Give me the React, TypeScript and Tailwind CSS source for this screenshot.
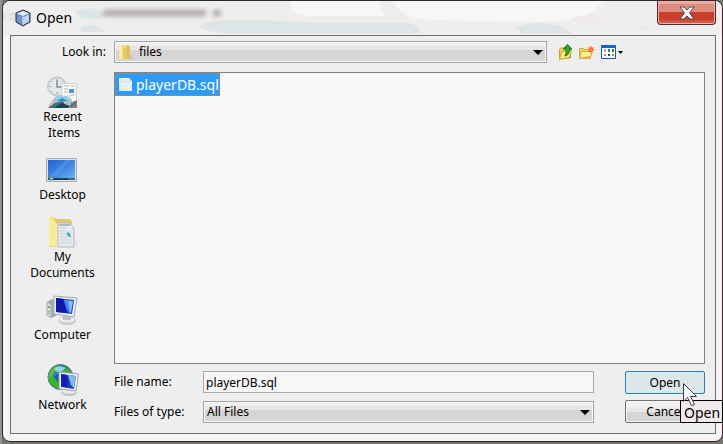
import { useState } from 'react'
import type { ReactNode } from 'react'

const comboClass =
  'h-[22px] w-full appearance-none rounded-none border border-[#a3a3ac] bg-[linear-gradient(#f0f0f0_0_4px,#ece5e6_4px_8px,#d5d5d5_8px)] pr-5 text-xs text-black shadow-[inset_0_0_0_1px_#f7f7f7] outline-none'

function AppIcon() {
  return (
    <svg width="18" height="18" viewBox="0 0 18 18" aria-hidden="true">
      <path d="M9 1 16 4v9l-7 4-7-4V4z" fill="#6585b5" stroke="#26334c" />
      <path d="M3 4.500 9 2l6 2.500L9 7z" fill="#e5eefa" />
      <path d="M3 5.500 8.500 8v7.500L3 12.500z" fill="#6f93ca" />
      <path d="M9.500 8 15 5.500v7l-5.500 3z" fill="#c3d5ee" />
      <path d="M9 7.500V16" stroke="#eef5ff" />
    </svg>
  )
}

function FolderIcon() {
  return (
    <svg width="16" height="16" viewBox="0 0 16 16" aria-hidden="true">
      <path d="M1 1h9l2 2v12H1z" fill="#f2dd82" />
      <path d="M1 1h3v14H1z" fill="#faeda9" />
      <path d="M8 2h4v9l2 2v2H8z" fill="#dfc05a" />
      <path d="M5 4h3v11H5z" fill="#e7cb68" />
      <path d="M12 11h2l1 4h-3z" fill="#c6c3b9" />
    </svg>
  )
}

function FileIcon() {
  return (
    <svg width="14" height="15" viewBox="0 0 14 15" aria-hidden="true">
      <path d="M0 1h10l3 3v10H0z" fill="#f7f7f7" />
      <path d="M10 1v3h3z" fill="#b6d4ea" />
      <path d="M1 3h8M1 5h11" stroke="#c8dfee" />
      <path d="M0 7h13v7H0z" fill="#dfe7ea" />
      <path d="M1 8h11M1 10h11M1 12h11" stroke="#f3f5f5" />
    </svg>
  )
}

function RecentIcon() {
  return (
    <svg width="32" height="32" viewBox="0 0 32 32" aria-hidden="true">
      <circle cx="11" cy="10.500" r="10" fill="#c3c5c6" />
      <circle cx="11" cy="10.500" r="8.500" fill="#e4e8e8" stroke="#d3d5d5" />
      <path d="M11 3v2M11 16v2M3 10.500h2M5.500 5l1 1M16.500 5l-1 1M5.500 16l1-1" stroke="#9ba4a6" />
      <path d="M11 4v7h5" fill="none" stroke="#7c8f9a" strokeWidth="1.500" />
      <path d="M3 29l6-8 8-1 14 5v7H2z" fill="#b9bdbf" />
      <path d="M2 32l7-5 8-2 3 7z" fill="#3d6f6c" />
      <path d="M8 32l8-5 8 3-2 2z" fill="#1b4550" />
      <path d="M10 20h12v5H10z" fill="#8ccdee" />
      <path d="M11 25l5-3 6 3z" fill="#298cd8" />
      <path d="M16 7.500h14.500V25l-4 1-3-6h-8z" fill="#f9f9f9" stroke="#cfd1d3" />
      <path d="M18 10h5M25 10h4M18 13h4M18 16h4M24 19h5" stroke="#b0b4b9" />
      <path d="M23 13h5v4h-5z" fill="#4f93cb" />
      <path d="M25 27l6-3v8h-8z" fill="#7a8083" />
      <path d="M24 31l6-5" stroke="#4d5558" />
    </svg>
  )
}

function DesktopIcon() {
  return (
    <svg width="32" height="32" viewBox="0 0 32 32" aria-hidden="true">
      <defs>
        <linearGradient id="desktopSky" x1="0" y1="0" x2="1" y2="1">
          <stop offset="0" stopColor="#2265cf" />
          <stop offset=".5" stopColor="#3d83e4" />
          <stop offset="1" stopColor="#69b5f3" />
        </linearGradient>
      </defs>
      <path d="M.5 4.500h30v23H.5z" fill="#dfe1e4" stroke="#a8aeb8" />
      <path d="M2 6h27v18H2z" fill="url(#desktopSky)" />
      <path d="M20 6h5L10 22H4z" fill="#76aaf0" opacity=".35" />
      <path d="M2 24h27v2H2z" fill="#263d55" />
      <path d="M22 24h7v2h-7z" fill="#4c6371" />
      <circle cx="5" cy="24" r="2.500" fill="#2b9ec6" />
      <path d="M4 22h1v2H3z" fill="#e26a34" />
      <path d="M5 24h2v1H5z" fill="#f2db54" />
    </svg>
  )
}

function DocumentsIcon() {
  return (
    <svg width="32" height="32" viewBox="0 0 32 32" aria-hidden="true">
      <path d="M2 1h5l3 2h13l2 3v25H2z" fill="#f1da78" />
      <path d="M2 1 11 8v23H2z" fill="#f9eb9c" />
      <path d="M7 3h15l3 3v4H12z" fill="#e2c66c" />
      <path d="M11 7h11q5 3 5 7v17H11z" fill="#e4eaec" stroke="#b2bbc0" />
      <path d="M13 12h6M13 15h5M13 18h6M13 21h9M13 24h11M13 27h11" stroke="#c8cfd3" />
      <path d="M12 9h11" stroke="#5f90a4" />
      <path d="m20 15 4 3v4l-4-2z" fill="#86c5da" />
      <path d="m20 17 3 3" stroke="#206b92" />
      <path d="m2 30 8 1" stroke="#e7d681" />
      <path d="M28 25h2v6h-2z" fill="#efdfdf" />
    </svg>
  )
}

function ComputerIcon() {
  return (
    <svg width="32" height="32" viewBox="0 0 32 32" aria-hidden="true">
      <path d="m1 8 5-3 4 2v15l-5 2-4-3z" fill="#a4abad" />
      <path d="m1 8 4 2v14l-4-3z" fill="#dcdfe0" stroke="#a6aaad" />
      <path d="M2 12h2v2H2z" fill="#61c321" />
      <path d="m2 17 2 1M2 19l2 1" stroke="#8d9598" />
      <ellipse cx="21" cy="26.500" rx="9" ry="4.500" fill="#c7cacb" />
      <ellipse cx="21" cy="25.500" rx="8" ry="3" fill="#eceeee" />
      <path d="m17 21 8 1v4h-8z" fill="#b9c0c3" />
      <path d="m8 2 23 2-3 19-20-3z" fill="#edeeee" stroke="#a2abb4" />
      <path d="m10 4 18 2-2 14-16-2z" fill="#1745c7" />
      <path d="m10 4 7 1 4 14-11-1z" fill="#1115aa" />
      <path d="m18 6 9 1-2 12-2-1z" fill="#85bdf5" />
      <path d="m18 6 4 .500 2 12-3-3z" fill="#4e82e7" />
    </svg>
  )
}

function NetworkIcon() {
  return (
    <svg width="32" height="32" viewBox="0 0 32 32" aria-hidden="true">
      <circle cx="13.500" cy="13" r="12.500" fill="#2f84b7" stroke="#48768a" />
      <path d="M2 8 7 3l7-2-2 4-5 3-1 4-5 3z" fill="#5db547" />
      <path d="M1 14l5-1 5 5 1 7-5-2-4-4z" fill="#39b522" />
      <path d="m17 2 7 5-2 3-6-2z" fill="#4aa539" />
      <path d="M7 5c5-4 9-2 11-1-3 5-7 6-11 1z" fill="#abe5f4" opacity=".8" />
      <path d="M7 13 12 9v10z" fill="#1161b2" />
      <ellipse cx="22" cy="28.500" rx="8" ry="3.500" fill="#c2c5c7" />
      <ellipse cx="22" cy="27.500" rx="7" ry="2" fill="#eceeee" />
      <path d="m12 8 19.500 2L29 27l-17-2z" fill="#f1f2f2" stroke="#9ba3ac" />
      <path d="m14 10 15 2-2 13-13-2z" fill="#1744c5" />
      <path d="m14 10 6 1 1 12-7-1z" fill="#171eab" />
      <path d="m21 11 8 1-2 12-3-3z" fill="#83b9ef" />
    </svg>
  )
}

function UpIcon() {
  return (
    <svg width="14" height="16" viewBox="0 0 14 16" aria-hidden="true">
      <path d="M.5 6l1-2h3l1 1h6v9H.5z" fill="#f3d65d" stroke="#c39832" />
      <path d="m.5 15.500 2-8 10-1-2 7z" fill="#fbe985" stroke="#c9a030" />
      <path d="m8.500.500 4.500 4.500h-2.500c0 4-1 6-4.500 7 1.500-3 1.500-5 .5-7H4z" fill="#30a82c" stroke="#15771b" />
    </svg>
  )
}

function NewFolderIcon() {
  return (
    <svg width="16" height="16" viewBox="0 0 16 16" aria-hidden="true">
      <path d="M.5 4.500h4l1 1h6v9H.5z" fill="#f3d65d" stroke="#d0a845" />
      <path d="m.5 14.500 2-7h11l-2 5z" fill="#fff193" stroke="#d0a845" />
      <path d="M12 2v7M8.500 5.500h7M9.500 3l5 5M14.500 3l-5 5" stroke="#f07335" />
      <circle cx="12" cy="5.500" r="2" fill="#ff4e21" />
      <circle cx="12" cy="5.500" r="1" fill="#ffb03d" />
    </svg>
  )
}

function ViewIcon() {
  return (
    <svg width="22" height="14" viewBox="0 0 22 14" aria-hidden="true">
      <path d="M.5.500h14v13H.5z" fill="#fff" stroke="#0756b9" />
      <path d="M0 0h15v3H0z" fill="#1267cf" />
      <path d="M3 4h2v3H3z" fill="#aaa1cc" />
      <path d="M7 4h2v3H7z" fill="#2679bb" />
      <path d="M11 4h2v3h-2z" fill="#188c2a" />
      <path d="M3 9h2v2H3z" fill="#f1744e" />
      <path d="M7 9h2v2H7z" fill="#163fa2" />
      <path d="M11 9h2v2h-2z" fill="#b99a20" />
      <path d="M17 6h5l-2.500 3z" />
    </svg>
  )
}

function Arrow() {
  return (
    <svg className="pointer-events-none absolute top-[9px] right-1" width="10" height="5" viewBox="0 0 10 5" aria-hidden="true">
      <path d="M0 0h10L5 5z" />
    </svg>
  )
}

// Shapes of the page behind, seen through the glass title bar
function GlassBackdrop() {
  return (
    <svg className="absolute inset-0 h-full w-full" viewBox="0 0 719 34" preserveAspectRatio="none" aria-hidden="true">
      <defs>
        <filter id="smear" filterUnits="userSpaceOnUse" x="80" y="0" width="160" height="34">
          <feGaussianBlur stdDeviation="2" />
        </filter>
      </defs>
      <path d="M288 0h87l7 15h-80l-13-4zM390 0h210q-14 20-48 20-40 2-140-2-16-6-22-18z" fill="#f7f7f7" />
      <path d="M0 13q14-5 28 0L20 20H0zM72 11q15-8 28 1v6H80zM197 26q2-7 40-7 40 0 80 3h70q24-3 30 7l-4 4H240q-30 1-43-7zM78 27q15-8 24 4H78z" fill="#dde5e6" />
      <path d="M512 27q22-10 50 0l8 6h-50z" fill="#dde5e6" />
      <path d="M567 18q18-8 35 1-20 8-35-1zM2 8h5v13H2zM626 30l20-6v6z" fill="#f0e8e8" />
      <path d="M103 12H200M213 12h2" stroke="#b5adad" strokeWidth="7" strokeLinecap="round" filter="url(#smear)" />
    </svg>
  )
}

function Place({ label, icon, tall }: { label: ReactNode; icon: ReactNode; tall?: boolean }) {
  return (
    <button className={`flex flex-col items-center gap-px text-center leading-4 ${tall ? 'mt-2' : ''}`}>
      {icon}
      <span>{label}</span>
    </button>
  )
}

export default function App() {
  const [fileName, setFileName] = useState('playerDB.sql')

  return (
    <div className="flex min-h-screen flex-col overflow-hidden bg-[linear-gradient(90deg,#8f9396_0_2px,#73766f_2px)] pb-[2px] pl-[2px] font-['Noto_Sans',sans-serif] text-xs text-black">
      <div className="flex flex-1 flex-col rounded-lg border border-[#37252d] bg-[#f5f5f5] pr-[6px] pb-[7px] pl-[7px]">
        <header className="relative -mr-[6px] -ml-[7px] flex h-[34px] items-start justify-between overflow-hidden rounded-t-lg bg-[#eee] pl-[11px]">
          <GlassBackdrop />
          <div className="relative flex h-[34px] items-center gap-1">
            <AppIcon />
            <h1 className="text-sm">Open</h1>
          </div>
          <button aria-label="Close" className="relative mr-[6px] flex h-6 w-[59px] items-center justify-center rounded-b border border-t-0 border-[#57262b] bg-[linear-gradient(#e9aaa0_0_3px,#dc8b7f_3px_11px,#c93f2c_11px_18px,#d86d55)] shadow-[inset_0_0_0_1px_#efb1a7]">
            <svg width="16" height="14" viewBox="0 0 16 14" aria-hidden="true">
              <path d="M1 1h4l3 3 3-3h4l-4.500 6 4.500 6h-4l-3-3-3 3H1l4.500-6z" fill="#f7f7f7" stroke="#514c56" />
            </svg>
          </button>
        </header>

        <main className="flex flex-1 flex-col border border-[#6e6e72] bg-[#eee] pt-[5px] pr-[10px] pb-[10px]">
          <div className="flex items-center">
            <label htmlFor="lookIn" className="w-[95px] text-right">Look in:</label>
            <div className="relative ml-2 flex-1">
              <select id="lookIn" className={`${comboClass} pl-6`}>
                <option>files</option>
              </select>
              <span className="pointer-events-none absolute top-[3px] left-1"><FolderIcon /></span>
              <Arrow />
            </div>
            <div className="flex w-[158px] items-center gap-[6px] pl-3">
              <button aria-label="Up one level"><UpIcon /></button>
              <button aria-label="Create new folder"><NewFolderIcon /></button>
              <button aria-label="View menu"><ViewIcon /></button>
            </div>
          </div>

          <div className="mt-[9px] flex flex-1">
            <nav aria-label="Places" className="flex w-[103px] flex-col items-center gap-[13px] pt-1">
              <Place icon={<RecentIcon />} label={<>Recent<br />&nbsp;Items</>} />
              <Place icon={<DesktopIcon />} label="Desktop" />
              <Place icon={<DocumentsIcon />} label={<>My<br />Documents</>} />
              <Place icon={<ComputerIcon />} label="Computer" />
              <Place icon={<NetworkIcon />} label="Network" tall />
            </nav>

            <div className="flex flex-1 flex-col">
              <ul className="flex-1 border border-[#81818c] bg-[#f7f7f7]">
                <li className="flex">
                  <button className="flex h-[23px] items-center gap-[3px] border border-dotted border-[#c78641] bg-[#2e9af7] pl-[3px] text-sm text-white">
                    <FileIcon />
                    playerDB.sql
                  </button>
                </li>
              </ul>

              <div className="mt-[7px] flex">
                <div className="flex flex-1 flex-col gap-2">
                  <div className="flex items-center">
                    <label htmlFor="fileName" className="w-[89px]">File name:</label>
                    <input
                      id="fileName"
                      value={fileName}
                      onChange={(e) => setFileName(e.target.value)}
                      className="h-[22px] min-w-0 flex-1 border border-[#a9a9b3] bg-[#f7f7f7] px-[2px] outline-none"
                    />
                  </div>
                  <div className="flex items-center">
                    <label htmlFor="fileType" className="w-[89px]">Files of type:</label>
                    <div className="relative flex-1">
                      <select id="fileType" className={`${comboClass} pl-[3px]`}>
                        <option>All Files</option>
                      </select>
                      <Arrow />
                    </div>
                  </div>
                </div>

                <div className="relative ml-[31px] flex w-20 flex-col gap-[6px]">
                  <button className="h-[23px] rounded-xs border border-[#397da5] bg-[#dde6e8] shadow-[inset_0_0_0_1px_#c5eef8]">Open</button>
                  <button className="h-[23px] rounded-xs border border-[#707070] bg-[linear-gradient(#f0f0f0_0_7px,#ece5e6_7px_11px,#d5d5d5_11px)] shadow-[inset_0_0_0_1px_#f7f7f7]">Cancel</button>
                  <div role="tooltip" className="absolute top-[29px] left-[55px] h-[23px] w-[43px] border border-black bg-[#f1e8e9] pl-[3px] text-sm leading-[23px]">
                    Open
                  </div>
                  <svg className="pointer-events-none absolute top-3 left-[58px]" width="16" height="24" viewBox="0 0 16 24" aria-hidden="true">
                    <path d="M.5.500v18l4-4 4 8 3-1-4-8h6z" fill="#f7f7f7" stroke="#3a3f58" />
                  </svg>
                </div>
              </div>
            </div>
          </div>
        </main>
      </div>
    </div>
  )
}
